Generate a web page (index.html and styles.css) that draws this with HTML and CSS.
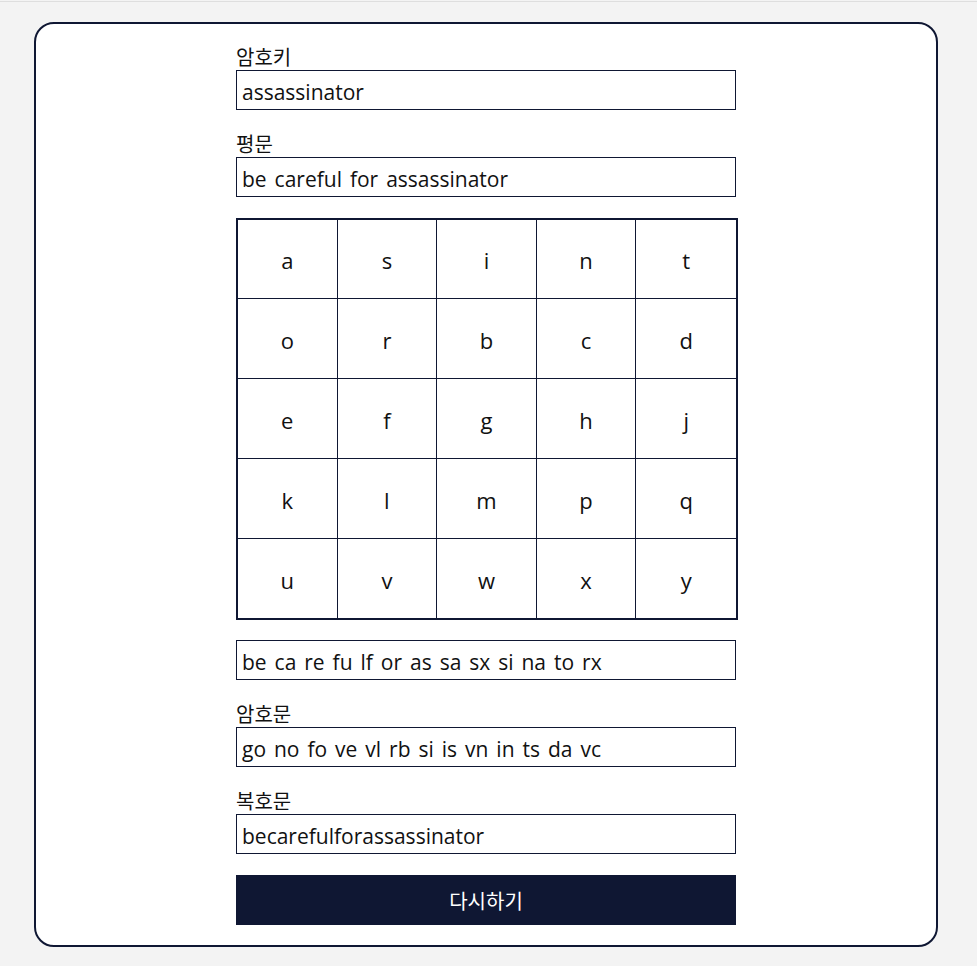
FILE: index.html
```html
<!DOCTYPE html>
<html lang="ko">
<head>
<meta charset="utf-8">
<title>Playfair</title>
<link rel="stylesheet" href="styles.css">
</head>
<body>
<div class="topline"></div>
<main class="card">
  <div class="form">
    <div class="field">
      <label class="label">암호키</label>
      <div class="input">assassinator</div>
    </div>
    <div class="field">
      <label class="label">평문</label>
      <div class="input">be careful for assassinator</div>
    </div>
    <div class="matrix">
      <div class="cell">a</div><div class="cell">s</div><div class="cell">i</div><div class="cell">n</div><div class="cell">t</div>
      <div class="cell">o</div><div class="cell">r</div><div class="cell">b</div><div class="cell">c</div><div class="cell">d</div>
      <div class="cell">e</div><div class="cell">f</div><div class="cell">g</div><div class="cell">h</div><div class="cell">j</div>
      <div class="cell">k</div><div class="cell">l</div><div class="cell">m</div><div class="cell">p</div><div class="cell">q</div>
      <div class="cell">u</div><div class="cell">v</div><div class="cell">w</div><div class="cell">x</div><div class="cell">y</div>
    </div>
    <div class="input">be ca re fu lf or as sa sx si na to rx</div>
    <div class="field">
      <label class="label">암호문</label>
      <div class="input">go no fo ve vl rb si is vn in ts da vc</div>
    </div>
    <div class="field">
      <label class="label">복호문</label>
      <div class="input">becarefulforassassinator</div>
    </div>
    <button class="button">다시하기</button>
  </div>
</main>
</body>
</html>
```
FILE: styles.css
```css
html {
  background: #f3f3f3;
}
body {
  margin: 0;
  padding: 1px 0 20px;
  font-family: "Open Sans", "Noto Sans CJK KR", sans-serif;
  color: #111;
}
.topline {
  height: 1px;
  background: #dedede;
}
.card {
  box-sizing: border-box;
  width: 904px;
  margin: 20px 0 0 34px;
  background: #fff;
  border: 2px solid #0f1733;
  border-radius: 20px;
  padding: 19px 0 20px;
}
.form {
  width: 502px;
  margin: 0 auto 0 200px;
  display: flex;
  flex-direction: column;
  gap: 20px;
}
.field {
  display: flex;
  flex-direction: column;
}
.label {
  font-family: "Noto Sans CJK KR", sans-serif;
  font-size: 20px;
  line-height: 28px;
  height: 27px;
}
.input {
  box-sizing: border-box;
  width: 500px;
  height: 40px;
  border: 1px solid #0f1733;
  padding: 3px 5px 0;
  font-size: 21px;
  line-height: 36px;
  word-spacing: 2.5px;
  white-space: nowrap;
}
.matrix {
  box-sizing: border-box;
  width: 502px;
  margin-top: 1px;
  border: 2px solid #0f1733;
  display: grid;
  grid-template-columns: repeat(5, 1fr);
  grid-template-rows: 79px 80px 80px 80px 79px;
}
.cell {
  display: flex;
  align-items: center;
  justify-content: center;
  font-size: 22px;
  padding-top: 2px;
  border-right: 1px solid #0f1733;
  border-bottom: 1px solid #0f1733;
}
.cell:nth-child(5n) {
  border-right: none;
}
.cell:nth-child(n+21) {
  border-bottom: none;
}
.button {
  box-sizing: border-box;
  width: 500px;
  height: 50px;
  margin-top: 1px;
  border: none;
  background: #0f1733;
  color: #fff;
  font-family: "Noto Sans CJK KR", sans-serif;
  font-size: 20px;
  padding: 0;
}
```
